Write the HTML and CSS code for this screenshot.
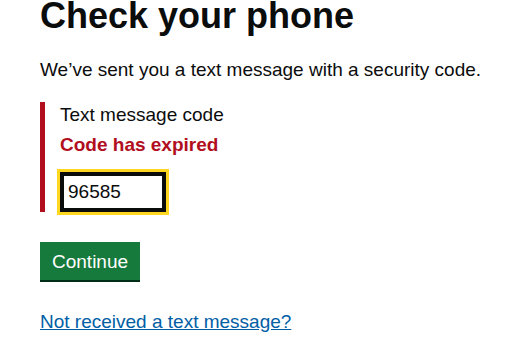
FILE: index.html
```html
<!DOCTYPE html>
<html lang="en">
<head>
<meta charset="utf-8">
<title>Check your phone</title>
<link rel="stylesheet" href="styles.css">
</head>
<body>
<main class="page">
  <h1 class="heading">Check your phone</h1>
  <p class="body">We’ve sent you a text message with a security code.</p>
  <div class="form-group form-group--error">
    <label class="label" for="code">Text message code</label>
    <span class="error-message">Code has expired</span>
    <input class="input input--focus" id="code" type="text" value="96585">
  </div>
  <button class="button" type="button">Continue</button>
  <p class="body"><a class="link" href="#">Not received a text message?</a></p>
</main>
</body>
</html>
```
FILE: styles.css
```css
html, body {
  margin: 0;
  padding: 0;
  background: #ffffff;
}
.page {
  padding: 0 0 0 40px;
  font-family: "Liberation Sans", Arial, sans-serif;
  color: #0b0c0c;
}
.heading {
  margin: 0 0 25px;
  font-size: 36px;
  line-height: 32px;
  font-weight: 700;
}
.body {
  margin: 0 0 20px;
  font-size: 19px;
  line-height: 25px;
}
.form-group {
  margin-bottom: 30px;
}
.form-group--error {
  border-left: 5px solid #b10e1e;
  padding-left: 15px;
  display: flex;
  flex-direction: column;
  align-items: flex-start;
}
.label {
  font-size: 19px;
  line-height: 25px;
  margin-bottom: 5px;
}
.error-message {
  font-size: 19px;
  line-height: 25px;
  font-weight: 700;
  color: #b10e1e;
  margin-bottom: 15px;
}
.input {
  box-sizing: border-box;
  width: 106px;
  height: 40px;
  margin: 0;
  padding: 3px 4px 3px 6px;
  border: 2px solid #0b0c0c;
  border-radius: 0;
  font-family: "Liberation Sans", Arial, sans-serif;
  font-size: 19px;
  color: #0b0c0c;
}
.input--focus {
  outline: 3px solid #ffd720;
  outline-offset: 0;
  box-shadow: inset 0 0 0 2px #0b0c0c;
}
.button {
  display: block;
  margin: 0 0 29px;
  padding: 8px 10px 7px;
  border: 2px solid transparent;
  border-radius: 0;
  background: #167a3c;
  box-shadow: 0 2px 0 #002d18;
  color: #ffffff;
  font-family: "Liberation Sans", Arial, sans-serif;
  font-size: 19px;
  line-height: 19px;
  cursor: pointer;
}
.link {
  color: #005ea5;
  text-decoration: underline;
}
```
